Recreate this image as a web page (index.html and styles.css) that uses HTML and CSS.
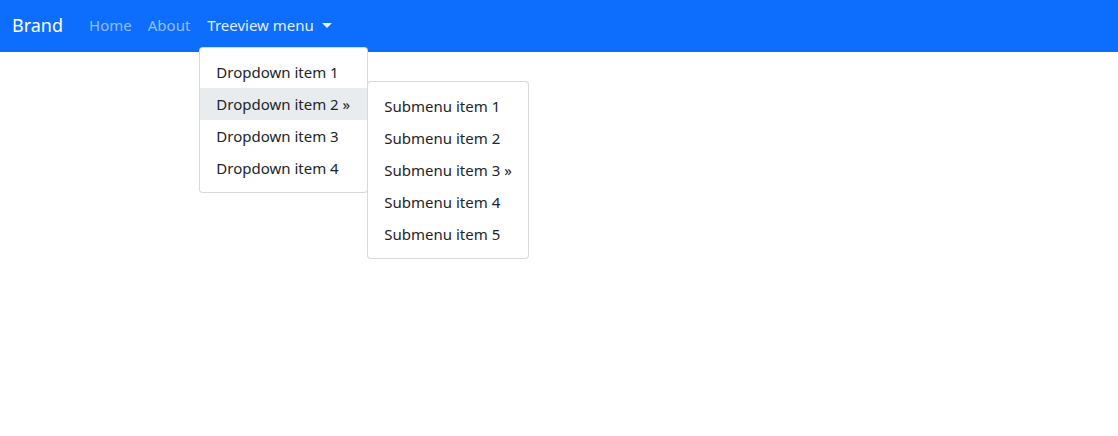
FILE: index.html
```html
<!DOCTYPE html>
<html lang="en">
<head>
	<meta charset="UTF-8">
	<title>Treeview menu</title>
	<link rel="stylesheet" href="styles.css">
</head>
<body>
	<nav class="navbar">
		<a class="brand" href="#">Brand</a>
		<ul class="nav">
			<li><a class="nav-link" href="#">Home</a></li>
			<li><a class="nav-link" href="#">About</a></li>
			<li class="dropdown">
				<a class="nav-link show" href="#">Treeview menu <span class="caret"></span></a>
				<ul class="dropdown-menu main-menu">
					<li><a class="dropdown-item" href="#">Dropdown item 1</a></li>
					<li class="has-sub">
						<a class="dropdown-item active" href="#">Dropdown item 2 &raquo;</a>
						<ul class="dropdown-menu submenu">
							<li><a class="dropdown-item" href="#">Submenu item 1</a></li>
							<li><a class="dropdown-item" href="#">Submenu item 2</a></li>
							<li><a class="dropdown-item" href="#">Submenu item 3 &raquo;</a></li>
							<li><a class="dropdown-item" href="#">Submenu item 4</a></li>
							<li><a class="dropdown-item" href="#">Submenu item 5</a></li>
						</ul>
					</li>
					<li><a class="dropdown-item" href="#">Dropdown item 3</a></li>
					<li><a class="dropdown-item" href="#">Dropdown item 4</a></li>
				</ul>
			</li>
		</ul>
	</nav>
</body>
</html>
```

FILE: styles.css
```css
*{
	box-sizing:border-box;
}
body{
	margin:0;
	min-height:436px;
	font-family:"Noto Sans","Open Sans",sans-serif;
	font-size:15px;
	line-height:24px;
	color:#212529;
	background:#fff;
}
ul{
	margin:0;
	padding:0;
	list-style:none;
}
a{
	text-decoration:none;
}
.navbar{
	display:flex;
	align-items:center;
	position:relative;
	height:52px;
	padding:0 12px 2px;
	background-color:#0d6efd;
}
.brand{
	font-size:18px;
	line-height:30px;
	color:#fff;
	margin-right:18px;
}
.nav{
	display:flex;
}
.nav-link{
	display:block;
	padding:0 8px;
	color:rgba(255,255,255,0.55);
}
.nav-link.show{
	color:rgba(255,255,255,0.9);
}
.caret{
	display:inline-block;
	margin-left:4px;
	vertical-align:3px;
	border-top:5px solid;
	border-left:5px solid transparent;
	border-right:5px solid transparent;
}
.dropdown{
	position:relative;
	margin-left:1px;
}
.dropdown-menu{
	position:absolute;
	z-index:1000;
	top:34px;
	left:0;
	min-width:160px;
	padding:8px 0;
	background:#fff;
	border:1px solid rgba(0,0,0,0.15);
	border-radius:4px;
}
.main-menu{
	min-width:169px;
}
.has-sub{
	position:relative;
}
.submenu{
	top:-7px;
	left:100%;
}
.dropdown-item{
	display:block;
	padding:4px 16px;
	color:#212529;
	white-space:nowrap;
}
.dropdown-item.active{
	background-color:#e9ecef;
}
```
